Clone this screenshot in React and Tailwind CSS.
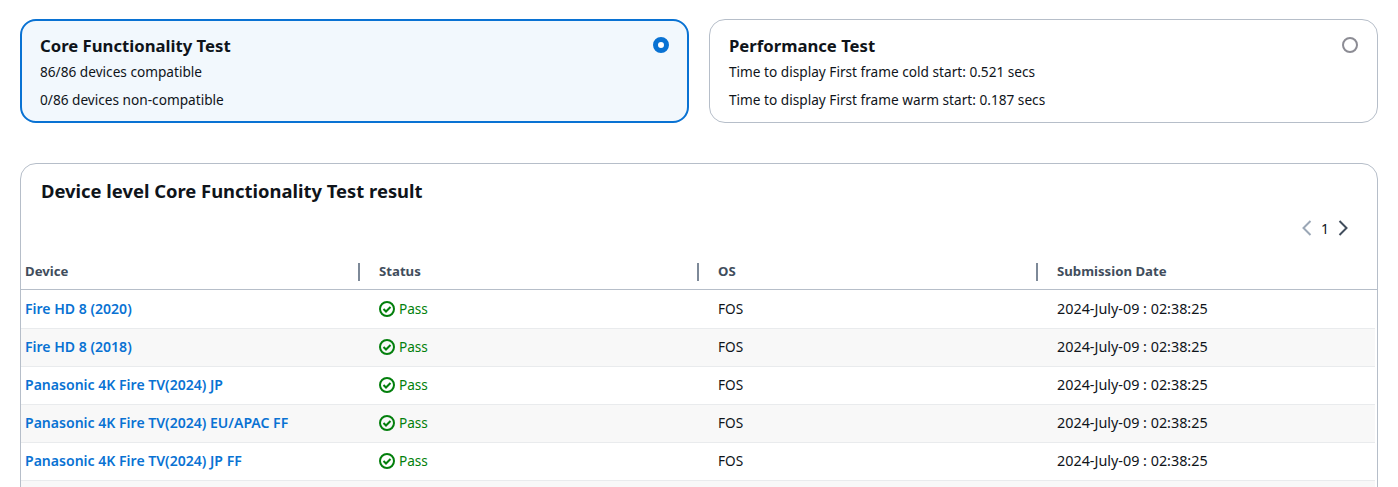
const rows = [
  'Fire HD 8 (2020)',
  'Fire HD 8 (2018)',
  'Panasonic 4K Fire TV(2024) JP',
  'Panasonic 4K Fire TV(2024) EU/APAC FF',
  'Panasonic 4K Fire TV(2024) JP FF',
];

const PassIcon = () => (
  <svg width="16" height="16" viewBox="0 0 16 16" fill="none" stroke="#037f0c" strokeWidth="2" className="shrink-0">
    <circle cx="8" cy="8" r="7" />
    <path d="M4.5 8 7 10.5 11.5 6" />
  </svg>
);

const TestCard = ({ title, lines, selected }) => (
  <div className={`h-[104px] rounded-2xl ${selected ? 'border-2 border-[#0972d3] bg-[#f2f8fd] px-[18px] pt-[14px]' : 'border border-[#b6bec9] bg-white px-[19px] pt-[15px]'}`}>
    <div className="flex justify-between items-start">
      <h2 className="text-[16.7px] leading-[22px] font-bold text-[#0f141a]">{title}</h2>
      {selected ? (
        <span className="w-4 h-4 mt-[2px] rounded-full border-[5px] border-[#0972d3] bg-white" />
      ) : (
        <span className="w-4 h-4 mt-[2px] rounded-full border-2 border-[#8c8c94] bg-white" />
      )}
    </div>
    {lines.map((l) => (
      <p key={l} className="text-[13.65px] leading-[20px] mt-2 first-of-type:mt-[5px] text-[#0f141a]">{l}</p>
    ))}
  </div>
);

const HeaderCell = ({ label, first, last }) => (
  <div className="flex items-center h-[19px]">
    <span className={`flex-1 text-[13.2px] font-bold text-[#414d5c] ${first ? 'pl-1' : 'pl-[19px]'}`}>{label}</span>
    {!last && <span className="w-[2px] h-[18px] bg-[#7d8998]" />}
  </div>
);

export default function App() {
  return (
    <div className="h-[487px] overflow-hidden bg-white px-5 pt-[19px] font-['Noto_Sans',sans-serif]">
      <div className="grid grid-cols-2 gap-5">
        <TestCard
          selected
          title="Core Functionality Test"
          lines={['86/86 devices compatible', '0/86 devices non-compatible']}
        />
        <TestCard
          title="Performance Test"
          lines={['Time to display First frame cold start: 0.521 secs', 'Time to display First frame warm start: 0.187 secs']}
        />
      </div>

      <div className="mt-10 border border-[#b6bec9] rounded-2xl">
        <div className="pl-5 pr-7 pt-[14px]">
          <h2 className="text-[18.4px] leading-[26px] font-bold text-[#0f141a]">Device level Core Functionality Test result</h2>
          <div className="flex justify-end items-center gap-2 mt-3 h-6">
            <svg width="12" height="16" viewBox="0 0 12 16" fill="none" stroke="#9ba7b6" strokeWidth="2"><path d="M9.5 1 2.5 8l7 7" /></svg>
            <span className="text-[14px] text-[#0f141a]">1</span>
            <svg width="12" height="16" viewBox="0 0 12 16" fill="none" stroke="#414d5c" strokeWidth="2"><path d="M2.5 1 9.5 8l-7 7" /></svg>
          </div>
        </div>
        <div className="grid grid-cols-[339px_339px_339px_1fr] items-center h-[37px] pt-[1px] mt-[13px] border-b border-[#b6bec9]">
          <HeaderCell first label="Device" />
          <HeaderCell label="Status" />
          <HeaderCell label="OS" />
          <HeaderCell last label="Submission Date" />
        </div>
        {rows.map((name, i) => (
          <div key={name} className={`grid grid-cols-[339px_339px_339px_1fr] items-center mr-[2px] border-b border-[#e9ebed] ${i === 0 ? 'h-[39px] pt-[1px]' : 'h-[38px]'} ${i % 2 ? 'bg-[#f8f8f8]' : 'bg-white'}`}>
            <div className="pl-1 pb-[2px] text-[14.05px] leading-5 font-semibold text-[#0972d3]">{name}</div>
            <div className="pl-[19px] pb-[2px] flex items-center gap-1 text-[13.6px] leading-5 text-[#037f0c]"><PassIcon />Pass</div>
            <div className="pl-[19px] pb-[2px] text-[13.6px] leading-5 text-[#0f141a]">FOS</div>
            <div className="pl-[19px] pb-[2px] text-[14.36px] leading-5 text-[#0f141a]">2024-July-09 : 02:38:25</div>
          </div>
        ))}
        <div className="h-[38px] mr-[2px] bg-[#f8f8f8]" />
      </div>
    </div>
  );
}
